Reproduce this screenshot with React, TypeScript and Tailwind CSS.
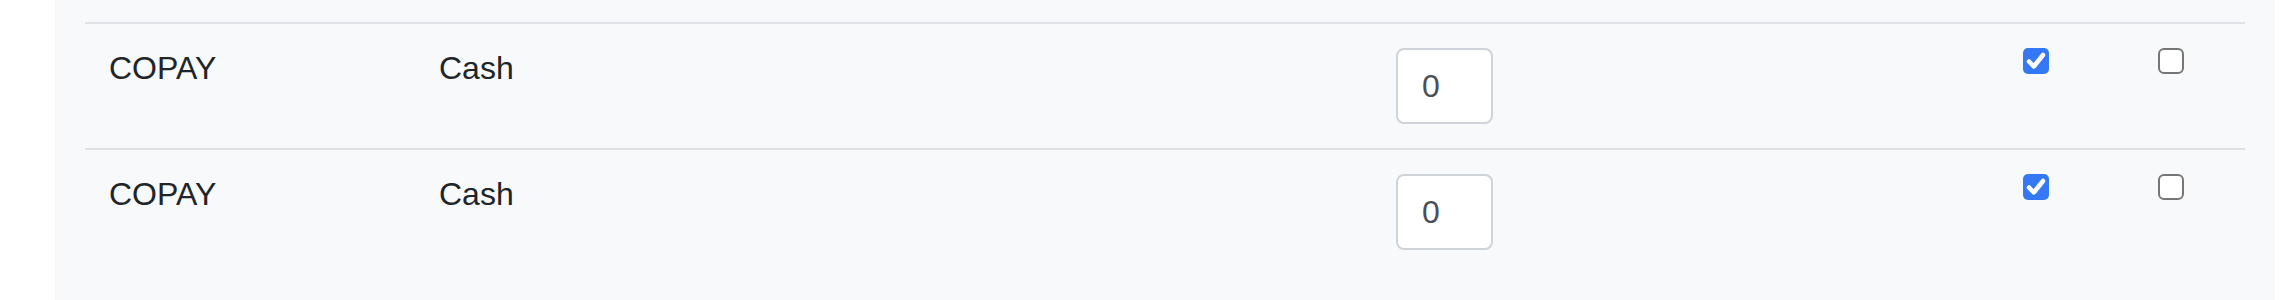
import React from "react";

const rows = [
  { type: "COPAY", method: "Cash", amount: "0", a: true, b: false },
  { type: "COPAY", method: "Cash", amount: "0", a: true, b: false },
];

function Checked() {
  return (
    <div className="w-[26px] h-[26px] rounded-[5px] bg-[#3478f6] flex items-center justify-center">
      <svg width="26" height="26" viewBox="0 0 26 26">
        <path d="M6 13.5 L10.8 18.5 L20 7" fill="none" stroke="white" strokeWidth="4.5" strokeLinecap="round" strokeLinejoin="round" />
      </svg>
    </div>
  );
}

function Unchecked() {
  return <div className="w-[26px] h-[26px] rounded-[6px] border-2 border-[#767676] bg-white" />;
}

export default function App() {
  return (
    <div className="w-[2290px] h-[300px] bg-white pl-[55px] pr-[15px] font-['Liberation_Sans',Arial,sans-serif] text-[32px] text-[#212529]">
      <div className="h-full bg-[#f8f9fa] px-[30px] pt-[22px]">
        {rows.map((r, i) => (
          <div key={i} className="grid grid-cols-[330px_957px_627px_135px_111px] border-t-2 border-[#dee2e6]">
            <div className="px-[24px] py-[24px] leading-[40px]">{r.type}</div>
            <div className="px-[24px] py-[24px] leading-[40px]">{r.method}</div>
            <div className="px-[24px] py-[24px]">
              <input
                readOnly
                value={r.amount}
                className="block w-[97px] h-[76px] rounded-[8px] border-2 border-[#ced4da] bg-white px-[24px] py-[12px] text-[32px] leading-[48px] text-[#495057] font-['Liberation_Sans',Arial,sans-serif] outline-none"
              />
            </div>
            <div className="px-[24px] py-[24px]">{r.a ? <Checked /> : <Unchecked />}</div>
            <div className="px-[24px] py-[24px]">{r.b ? <Checked /> : <Unchecked />}</div>
          </div>
        ))}
      </div>
    </div>
  );
}
